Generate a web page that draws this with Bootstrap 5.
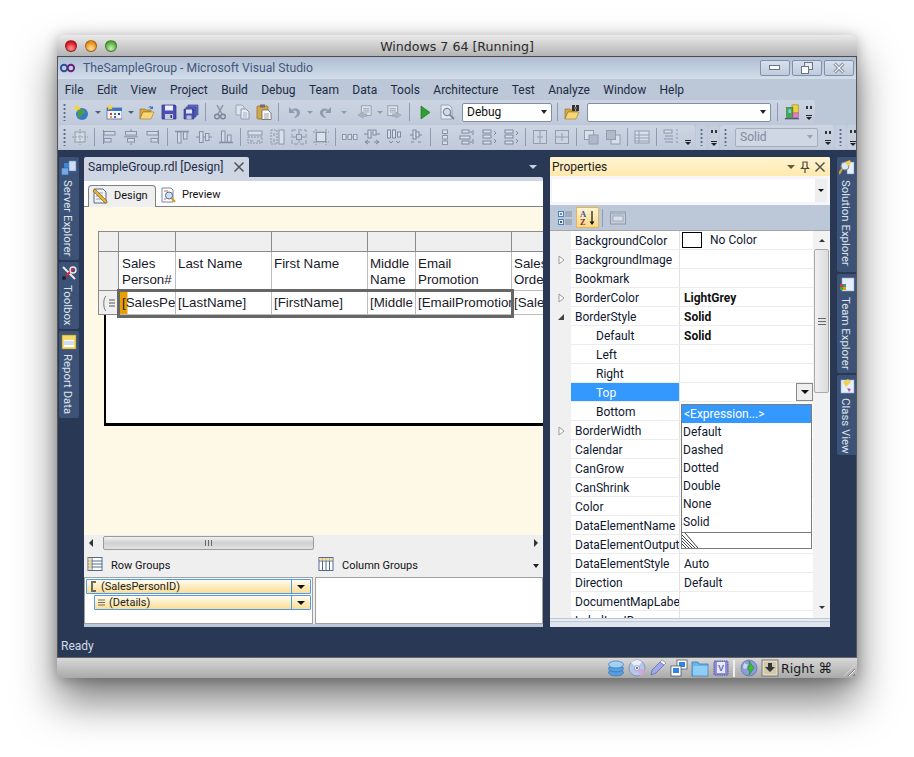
<!DOCTYPE html>
<html lang="en"><head><meta charset="utf-8"><title>Windows 7 64</title>
<link href="https://cdn.jsdelivr.net/npm/bootstrap@5.3.0/dist/css/bootstrap.min.css" rel="stylesheet">
<style>
html,body{height:757px;overflow:hidden;background:#fff}
body{font-family:Roboto,"Noto Sans",sans-serif;font-size:12px;line-height:1;color:#111}
.vs-win{margin:35px 0 0 57px;width:800px;height:643px;border-radius:5px 5px 3px 3px;box-shadow:0 24px 42px rgba(0,0,0,.5),0 2px 14px rgba(0,0,0,.28);background:#bcc7d8}
.vs-title{height:22px;background:linear-gradient(#eaeaea,#b4b4b4);border-bottom:1px solid #4c4c4c;border-radius:5px 5px 0 0;padding-left:8px;position:relative}
.vs-title-text{font:12.6px "DejaVu Sans",sans-serif;color:#2a2a2a;position:absolute;left:0;right:0;top:4px;text-align:center}
.vs-dot{width:12px;height:12px;border-radius:50%;margin-right:8px;border:1px solid rgba(0,0,0,.35)}
.vs-dot-r{background:radial-gradient(circle at 50% 75%,#ff9a9a,#d8101c 70%)}
.vs-dot-y{background:radial-gradient(circle at 50% 75%,#ffe0a0,#e88a10 70%)}
.vs-dot-g{background:radial-gradient(circle at 50% 75%,#c8f0b0,#52a838 70%)}
.vs-main{height:600px;border-left:1px solid #555;border-right:1px solid #555;background:#bcc7d8;overflow:hidden}
.vs-cap{height:22px;background:linear-gradient(#aebdd3,#d3deeb);padding-left:1px;color:#44557a}
.vs-logo{width:17px;height:10px}
.vs-cap-text{margin-left:7px;font-size:12.2px;padding-top:1px}
.vs-wbtn{width:30px;height:16px;border:1px solid #8090a8;border-radius:2px;background:linear-gradient(#d7e0ec,#bfcbdc);margin-right:2px}
.vs-menu{height:21px}
.vs-menu span{padding:0 6.7px;color:#1c2a44;font-size:12px}
.vs-tb{height:24px;margin-left:1px;background:linear-gradient(#cdd5e3,#c0cada);border-radius:3px}
.vs-tb1w{width:756px}
.vs-tb2w{width:636px}
.vs-tb3w{width:114px}
.vs-tb2{margin-top:1px}
.vs-tb2 .vs-slot svg{opacity:.8}
.vs-gap{background:#bcc7d8;height:1px}
.vs-grip{width:10px;height:18px;background:radial-gradient(circle,#5a6a85 1px,transparent 1.2px) center top/3px 4px repeat-y;flex:none}
.vs-slot{width:22px;height:22px;flex:none}
.vs-slot svg{width:16px;height:16px}
.vs-m1{margin-left:1px}
.vs-m3{margin-left:3px}
.vs-dd{width:11px;flex:none}
.vs-d12{width:12px}
.vs-d9{width:9px}
.vs-dd::after{content:"";display:block;margin:0 auto;width:0;height:0;border:3px solid transparent;border-top:3px solid #50607a;border-bottom:0}
.vs-dd-off::after{border-top-color:#8d99ac}
.vs-sep{width:7px;height:18px;flex:none;background:linear-gradient(#8f9bb0,#8f9bb0) center/1px 100% no-repeat}
.vs-sep2{margin-left:2px}
.vs-sep3{margin-left:3px}
.vs-chev{width:12px;flex:none;height:22px;position:relative}
.vs-chev::after{content:"";position:absolute;left:3px;bottom:7px;width:6px;height:1px;background:#222}
.vs-chev::before{content:"";position:absolute;left:3px;bottom:3px;border:3px solid transparent;border-top:3px solid #222;border-bottom:0}
.vs-chev2{background-image:linear-gradient(#333,#333),linear-gradient(#333,#333);background-size:2px 3px,2px 3px;background-position:3px 5px,7px 5px;background-repeat:no-repeat}
.vs-combo{height:19px;background:#fff;border:1px solid #7f8fa8;border-radius:2px;padding-left:4px;flex:none}
.vs-combo-arrow{width:0;height:0;border:3px solid transparent;border-top:4px solid #222;border-bottom:0;margin:0 4px 0 auto}
.vs-combo-w{width:90px;margin-left:4px;color:#111}
.vs-combo-l{width:184px;margin-left:4px}
.vs-combo-off{width:83px;background:#cfd7e3;color:#7f8a9c;border-color:#a4aebf;margin-left:5px}
.vs-combo-off .vs-combo-arrow{border-top-color:#98a3b4}
.vs-mini{width:11px;height:24px;border-radius:3px;background-color:#c5cedf;margin-left:1px;position:relative;flex:none}
.vs-work{height:477px;background:#293955;padding-top:7px}
.vs-vtabs{width:19px;margin-left:1px;flex:none}
.vs-vtab{background:#3d5277;border-radius:2px;color:#dfe5ee;writing-mode:vertical-rl;font-size:11.4px;padding-top:23px;padding-right:3px;position:relative;margin-bottom:2px;line-height:17px;white-space:nowrap;overflow:hidden}
.vs-vtab svg{position:absolute;top:3px;left:2px;width:16px;height:16px}
.vs-h103{height:103px}.vs-h67{height:67px}.vs-h87{height:87px}.vs-h115{height:115px}.vs-h99{height:99px}.vs-h80{height:80px}
.vs-doc{width:459px;margin-left:6px;flex:none;height:470px}
.vs-doctab{height:20px}
.vs-tabhead{width:165px;height:20px;background:#ced6e4;border-radius:2px 2px 0 0;padding-left:4px;color:#1d2b44;white-space:nowrap}
.vs-tabx{margin-left:auto;margin-right:4px}
.vs-caret{width:0;height:0;border:4px solid transparent;border-top:4px solid #c9d1de;border-bottom:0;margin:0 6px 0 auto}
.vs-caret-d{border-top-color:#6a5a30;margin-right:0}
.vs-strip{height:4px;background:#ced6e4;border-radius:0 2px 0 0}
.vs-subtabs{height:26px;background:#fff;border-bottom:1px solid #808080;padding-left:4px;align-items:flex-end}
.vs-design{width:68px;height:22px;background:#efefef;border:1px solid #808080;border-bottom:0;border-radius:4px 4px 0 0;padding:0 0 2px 3px;font-size:11px;color:#111;margin-bottom:-1px}
.vs-preview{height:22px;font-size:11px;padding:0 0 1px 4px;color:#111}
.vs-design svg,.vs-preview svg{width:16px;height:16px;margin-right:6px}
.vs-surface{height:328px;background:#fdf9e6;padding:24px 0 0 14px;position:relative;overflow:hidden;font-family:"Liberation Sans",Arial,sans-serif;font-size:13.33px}
.vs-rep{border-collapse:collapse;table-layout:fixed;width:445px}
.vs-c20{width:20px}.vs-c57{width:57px}.vs-c96{width:96px}.vs-c48{width:48px}.vs-c32{width:32px}
.vs-rep td{border:1px solid #bdbdbd;padding:4px 2px 0 2px;vertical-align:top;background:#fff;overflow:hidden;white-space:nowrap;line-height:16px;color:#1a1a2a}
.vs-rep td.vs-wrap{white-space:normal}
.vs-rep td.vs-first{padding-left:3px}
.vs-rep td.vs-hd{background:#efefef;border-color:#8b8b8b;padding:0}
.vs-rep tr.vs-r1 td{height:20px}
.vs-rep tr.vs-r2 td{height:39px}
.vs-rep tr.vs-r3 td{height:24px;padding-top:4px}
.vs-rep td.vs-handle{background:linear-gradient(90deg,#e8a000 8px,#fff 8px);padding-left:3px}
.vs-rep td.vs-gut{background:#efefef;padding:2px 0 0 2px;border-color:#8b8b8b}
.vs-sel{position:absolute;left:33px;top:82px;width:397px;height:29px;border:3px solid #666;pointer-events:none}
.vs-body{margin-left:6px;height:111px;background:#fff;border-left:2px solid #000;border-bottom:3px solid #000}
.vs-hs{height:15px;background:#efefef;padding:0 3px}
.vs-hs-thumb{width:211px;height:14px;margin-left:10px;background:linear-gradient(#f2f2f2,#d0d0d0 50%,#e2e2e2);border:1px solid #9a9a9a;border-radius:2px}
.vs-grv{width:8px;height:6px;background:repeating-linear-gradient(90deg,#666 0 1px,transparent 1px 3px)}
.vs-arr-l,.vs-arr-r{width:0;height:0;border:4px solid transparent}
.vs-arr-l{border-right:4px solid #333;border-left:0;margin-left:2px}
.vs-arr-r{border-left:4px solid #333;border-right:0;margin-left:auto;margin-right:2px}
.vs-ghead{height:27px;background:#efefef;font-size:11px;color:#111;padding-top:4px}
.vs-ghead svg{width:16px;height:16px;margin:-4px 8px 0 3px}
.vs-gcol{width:231px;flex:none}
.vs-glists{height:47px;background:#efefef}
.vs-glist{background:#fff;border:1px solid #a0a0a0;height:47px;position:relative}
.vs-gl1{width:229px;margin-right:2px;padding:1px 1px 0 1px}
.vs-gl2{width:228px}
.vs-gbar{height:15px;margin-bottom:1px;border:1px solid #4b9cea;background:linear-gradient(#fffdf0,#fdeabc 55%,#fcdc92);font-size:11px;padding-left:3px;border-radius:1px;color:#222}
.vs-gb2{margin-left:8px}
.vs-gi{margin-right:3px}
.vs-gdd{width:19px;height:100%;margin-left:auto;border-left:1px solid #4b9cea}
.vs-gdd::after{content:"";display:block;width:0;height:0;border:4px solid transparent;border-top:4px solid #111;border-bottom:0;margin:5px auto 0}
.vs-gfoot{height:3px;background:#bcc7d8}
.vs-props{width:280px;margin-left:7px;flex:none;height:470px;background:#efefef;position:relative;overflow:hidden;border-radius:2px 2px 0 0}
.vs-phead{height:19px;background:linear-gradient(#fff3d2,#ffe9ad);padding-left:2px;color:#222}
.vs-phead svg{width:12px;height:12px;margin-left:3px}
.vs-pcombo{height:29px;background:#f4f6f9;padding:3px 3px 3px 2px}
.vs-pbox{height:23px;background:#fff}
.vs-pbtn{width:12px;height:100%;background:#eee;margin-left:auto}
.vs-pbtn::after{content:"";display:block;width:0;height:0;border:3px solid transparent;border-top:3px solid #111;border-bottom:0;margin:10px auto 0}
.vs-ptool{height:25px;background:#bcc7d8;padding-left:3px}
.vs-ptool svg{width:16px;height:16px}
.vs-pb{width:23px;height:21px}
.vs-pb-on{background:linear-gradient(#fff3cf,#fbd98a);border:1px solid #e5b454}
.vs-grid{height:388px;background:#fff;overflow:hidden;border-top:1px solid #a5a5a5;position:relative}
.vs-rows{width:263px;flex:none}
.vs-row{height:19px;color:#101830}
.vs-g{width:21px;height:19px;flex:none;background:#f0f0f0}
.vs-n{width:109px;height:19px;flex:none;border-bottom:1px solid #ececec;border-right:1px solid #e2e2e2;padding-left:4px;overflow:hidden;white-space:nowrap;line-height:20px}
.vs-n2{padding-left:25px}
.vs-v{width:133px;height:19px;flex:none;border-bottom:1px solid #ececec;padding-left:4px;white-space:nowrap;line-height:20px}
.vs-v b{font-weight:700;color:#111}
.vs-on{background:#3399ff;color:#fff}
.vs-tri{width:7px;height:10px;margin-left:8px}
.vs-tri-d{width:0;height:0;margin-left:8px;border-style:solid;border-width:0 0 6px 6px;border-color:transparent transparent #444 transparent}
.vs-swatch{width:20px;height:16px;border:1px solid #000;background:#fff;margin-right:8px;margin-left:-2px}
.vs-vbtn{width:17px;height:18px;margin-left:auto;border:1px solid #8a8a8a;background:#eee}
.vs-vbtn::after{content:"";display:block;width:0;height:0;border:4px solid transparent;border-top:4px solid #111;border-bottom:0;margin:6px auto 0}
.vs-vs{width:17px;flex:none;background:#f2f2f2;height:388px}
.vs-vs-up,.vs-vs-dn{height:18px}
.vs-vs-up::after{content:"";display:block;width:0;height:0;border:3.5px solid transparent;border-bottom:3px solid #333;border-top:0;margin:8px auto 0}
.vs-vs-dn::after{content:"";display:block;width:0;height:0;border:3.5px solid transparent;border-top:3px solid #333;border-bottom:0;margin:5px auto 0}
.vs-vs-th{height:144px;background:linear-gradient(90deg,#f0f0f0,#dcdcdc);border:1px solid #a9a9a9;border-radius:2px;margin:0 1px}
.vs-grv2{width:8px;height:7px;background:repeating-linear-gradient(#666 0 1px,transparent 1px 3px)}
.vs-list{position:absolute;left:131px;top:173px;width:131px;height:145px;background:#fff;border:1px solid #7c7c7c;color:#101830;z-index:2}
.vs-li{height:18px;padding-left:1px}
.vs-li-on{background:#3399ff;color:#fff;padding-left:2px}
.vs-lfoot{height:16px;border-top:1px solid #7c7c7c;margin-top:1px;overflow:hidden}
.vs-lfoot svg{display:block;width:16px;height:15px}
.vs-pfoot{height:10px;background:linear-gradient(#bcc7d8 0 1px,#e8ebf0 1px 3px,#bcc7d8 3px 4px,#dfe4ec 4px 9px,#bcc7d8 9px)}
.vs-rtabs{width:19px;margin-left:7px;flex:none}
.vs-status{height:30px;background:#293955;color:#d5dce8;padding:8px 0 0 3px}
.vs-host{height:21px;background:linear-gradient(#d8d8d8,#a9a9a9);border-top:1px solid #666;border-radius:0 0 3px 3px;padding-left:548px;position:relative;color:#111}
.vs-hi{width:21px;height:20px;flex:none}
.vs-hi svg{width:18px;height:18px}
.vs-hsep{width:2px;height:17px;background:#efefef;margin:0 3px 0 2px}
.vs-rt{font:12.6px "DejaVu Sans",sans-serif;margin-left:1px;white-space:nowrap;color:#1a1a1a}
.vs-cmd{font-size:14px;margin-left:4px}
.vs-resize{position:absolute;right:2px;bottom:2px;width:11px;height:11px;background:repeating-linear-gradient(135deg,transparent 0 2px,#7f7f7f 2px 3px,#eee 3px 4px);clip-path:polygon(100% 0,100% 100%,0 100%)}
.vs-defs{position:absolute;width:0;height:0}
</style></head>
<body>
<svg class="vs-defs" aria-hidden="true"><defs>
<symbol id="web" viewBox="0 0 16 16"><circle cx="9" cy="10" r="6" fill="#3a78c8"/><path d="M5 7l4-2 3 2-1 3-3 1-1 4-2-3z" fill="#4aa040"/><path d="M4 0l1 2.500 2.500-.5L6 4l1.500 2L5 5.500 4 8 3 5.500.5 6 2 4 .5 2 3 2.500z" fill="#f7d43c"/></symbol>
<symbol id="newi" viewBox="0 0 16 16"><rect x="1" y="4" width="15" height="11" fill="#f4f6fb" stroke="#6f84a8"/><rect x="1" y="4" width="15" height="3" fill="#3f74c6"/><rect x="4" y="9" width="2" height="2" fill="#d33"/><rect x="8" y="9" width="2" height="2" fill="#393"/><rect x="12" y="9" width="2" height="2" fill="#33c"/><rect x="4" y="12" width="2" height="2" fill="#da2"/><rect x="8" y="12" width="2" height="2" fill="#93c"/><path d="M4 0l1 2 2-.5L5.500 3.500 6.500 5.500 4 5 2 6l.5-2.500L.5 2l2 0z" fill="#f7d43c"/></symbol>
<symbol id="open" viewBox="0 0 16 16"><path d="M1 5h5l1 1h5v2H4l-3 7z" fill="#d9a73c" stroke="#8a6a20" stroke-width=".6"/><path d="M4 8h11l-3 7H1z" fill="#f8d675" stroke="#9a7a28" stroke-width=".6"/><path d="M9 4c1-2 3-2 4-1l1-1v3h-3l1-1c-1-.7-2-.5-3 0z" fill="#3a70b8"/></symbol>
<symbol id="save" viewBox="0 0 16 16"><path d="M1 1h13l1 1v13H1z" fill="#4a4fb5" stroke="#2d3180" stroke-width=".7"/><rect x="4" y="1.500" width="8" height="5" fill="#eef"/><rect x="4" y="10" width="8" height="5" fill="#c5cae0"/><rect x="9.500" y="11" width="1.500" height="3" fill="#334"/></symbol>
<symbol id="saveall" viewBox="0 0 16 16"><path d="M5 1h10v10H5z" fill="#6a78c8" stroke="#2d3180" stroke-width=".6"/><path d="M3 3h10v10H3z" fill="#5a66c0" stroke="#2d3180" stroke-width=".6"/><path d="M1 5h10v10H1z" fill="#4a4fb5" stroke="#2d3180" stroke-width=".6"/><rect x="3" y="5.500" width="6" height="4" fill="#dfe3f5"/><rect x="3.500" y="11.500" width="5" height="3.500" fill="#b9bfd8"/></symbol>
<symbol id="cut" viewBox="0 0 16 16"><path d="M5 1l5 9M11 1L6 10" stroke="#8a94a6" stroke-width="1.500" fill="none"/><circle cx="5" cy="12.500" r="2.300" fill="none" stroke="#7a8496" stroke-width="1.400"/><circle cx="11" cy="12.500" r="2.300" fill="none" stroke="#7a8496" stroke-width="1.400"/></symbol>
<symbol id="copy" viewBox="0 0 16 16"><path d="M2 1h6l2 2v8H2z" fill="#dce2ec" stroke="#9aa4b6"/><path d="M7 5h5l3 3v7H7z" fill="#e6ebf3" stroke="#8f9aad"/><path d="M9 9h4M9 11h4M9 13h4" stroke="#aab3c2"/></symbol>
<symbol id="paste" viewBox="0 0 16 16"><rect x="1" y="2" width="11" height="13" rx="1" fill="#d3a84e" stroke="#8a6a20" stroke-width=".7"/><rect x="4" y=".5" width="5" height="3" fill="#6e6e6e"/><path d="M6 6h6l3 3v6.500H6z" fill="#fff" stroke="#555" stroke-width=".7"/><path d="M8 10h5M8 12h5M8 14h5" stroke="#777" stroke-width=".7"/></symbol>
<symbol id="undo" viewBox="0 0 16 16"><path d="M4 3v6h6L8 7c2-1 4 0 4 2 0 2-1 3-3 4l1 1c3-1 5-3 5-5 0-4-5-6-8-3z" fill="#8f9bad"/></symbol>
<symbol id="redo" viewBox="0 0 16 16"><path d="M12 3v6H6l2-2C6 6 4 7 4 9c0 2 1 3 3 4l-1 1C3 13 1 11 1 9c0-4 5-6 8-3z" fill="#8f9bad"/></symbol>
<symbol id="navb" viewBox="0 0 18 16"><rect x="6" y="1" width="11" height="11" fill="#dfe4ec" stroke="#8e99ac"/><path d="M8 4h7M8 6h7M8 8h7" stroke="#98a3b5"/><path d="M8 8v2h4v3H8v2L2 11.500z" fill="#aab3c2" stroke="#8e99ac" stroke-width=".5"/></symbol>
<symbol id="navf" viewBox="0 0 18 16"><rect x="1" y="1" width="11" height="11" fill="#dfe4ec" stroke="#8e99ac"/><path d="M3 4h7M3 6h7M3 8h7" stroke="#98a3b5"/><path d="M10 8v2H6v3h4v2l6-3.500z" fill="#aab3c2" stroke="#8e99ac" stroke-width=".5"/></symbol>
<symbol id="play" viewBox="0 0 16 16"><path d="M4 2l9 6.500L4 15z" fill="#2ea02e" stroke="#157015" stroke-width=".6"/></symbol>
<symbol id="find" viewBox="0 0 16 16"><path d="M2 1h8l3 3v11H2z" fill="#e6ebf3" stroke="#97a2b4"/><circle cx="8" cy="8" r="3.600" fill="#d4dbe6" stroke="#7f8ba0" stroke-width="1.300"/><path d="M10.500 10.500L15 15" stroke="#7f8ba0" stroke-width="2"/></symbol>
<symbol id="ffind" viewBox="0 0 16 16"><path d="M1 5h5l1 1h6v2H4l-3 7z" fill="#d9a73c" stroke="#8a6a20" stroke-width=".6"/><path d="M4 8h11l-3 7H1z" fill="#f8d675" stroke="#9a7a28" stroke-width=".6"/><rect x="8" y="1" width="3" height="6" fill="#333"/><rect x="12" y="1" width="3" height="6" fill="#333"/><rect x="10" y="3" width="3" height="2" fill="#666"/></symbol>
<symbol id="cfg" viewBox="0 0 18 18"><rect x="9" y="1" width="7" height="10" fill="#f2cf38" stroke="#927a14" stroke-width=".6"/><rect x="3" y="4" width="7" height="11" fill="#46a84a" stroke="#2a6a30" stroke-width=".6"/><rect x="5" y="6" width="3" height="4" fill="#7ed0e8"/><rect x="10" y="10" width="6" height="5" fill="#e77cc4" stroke="#98408a" stroke-width=".6"/><path d="M1 16.500h16" stroke="#4a5a78" stroke-width="1.500"/></symbol>
<symbol id="a0" viewBox="0 0 16 16"><g stroke="#8492a6" fill="none"><rect x="3" y="3" width="10" height="10" fill="#d7dde7"/><path d="M8 0v16M0 8h16" stroke-dasharray="2 1"/></g></symbol>
<symbol id="a1" viewBox="0 0 16 16"><g stroke="#74829a" fill="#d7dde7"><path d="M2.500 1v14"/><rect x="3" y="2.500" width="11" height="3.500"/><rect x="3" y="9.500" width="7" height="3.500"/></g></symbol>
<symbol id="a2" viewBox="0 0 16 16"><g stroke="#74829a" fill="#d7dde7"><rect x="2.500" y="2.500" width="11" height="3.500"/><rect x="4.500" y="9.500" width="7" height="3.500"/><path d="M1 7.800h14M8 0v2M8 14v2"/></g></symbol>
<symbol id="a3" viewBox="0 0 16 16"><g stroke="#74829a" fill="#d7dde7"><path d="M13.500 1v14"/><rect x="2" y="2.500" width="11" height="3.500"/><rect x="6" y="9.500" width="7" height="3.500"/></g></symbol>
<symbol id="a4" viewBox="0 0 16 16"><g stroke="#74829a" fill="#d7dde7"><path d="M1 2.500h14" stroke-width="1.500"/><rect x="3.500" y="3" width="3.500" height="11"/><rect x="9.500" y="3" width="3.500" height="7"/></g></symbol>
<symbol id="a5" viewBox="0 0 16 16"><g stroke="#74829a" fill="#d7dde7"><path d="M0 8h16"/><rect x="3.500" y="2.500" width="3.500" height="11"/><rect x="9.500" y="4.500" width="3.500" height="7"/></g></symbol>
<symbol id="a6" viewBox="0 0 16 16"><g stroke="#74829a" fill="#d7dde7"><path d="M1 13.500h14" stroke-width="1.500"/><rect x="3.500" y="2" width="3.500" height="11"/><rect x="9.500" y="6" width="3.500" height="7"/></g></symbol>
<symbol id="s1" viewBox="0 0 16 16"><g stroke="#7c899d" fill="none"><rect x="1" y="2" width="14" height="4" fill="#dfe4ec"/><rect x="1" y="8" width="14" height="6" stroke-dasharray="2 1"/><path d="M3 12h3M10 12h3"/></g></symbol>
<symbol id="s2" viewBox="0 0 16 16"><g stroke="#7c899d" fill="none"><rect x="10" y="1" width="5" height="14" fill="#dfe4ec"/><rect x="2" y="1" width="6" height="14" stroke-dasharray="2 1"/><path d="M5 4v3M5 10v3"/></g></symbol>
<symbol id="s3" viewBox="0 0 16 16"><g stroke="#7c899d" fill="none"><rect x="1" y="1" width="14" height="14" stroke-dasharray="4 2"/><rect x="5.500" y="5.500" width="5" height="5"/><path d="M8 2v3M8 11v3M2 8h3M11 8h3"/></g></symbol>
<symbol id="s4" viewBox="0 0 16 16"><g stroke="#7c899d" fill="#dfe4ec"><rect x="3.500" y="3.500" width="9" height="9"/><path d="M0 3h16M0 13h16M3 0v16M13 0v16" stroke-dasharray="2 1" fill="none"/></g></symbol>
<symbol id="h1" viewBox="0 0 16 16"><g stroke="#7c899d" fill="#dfe4ec"><rect x=".5" y="5.500" width="3.500" height="5"/><rect x="6" y="5.500" width="3.500" height="5"/><rect x="11.500" y="5.500" width="3.500" height="5"/><path d="M4 8h2M9.500 8h2" fill="none"/></g></symbol>
<symbol id="h2" viewBox="0 0 16 16"><g stroke="#6b7990" fill="#dfe4ec"><rect x="4" y="1" width="3" height="8"/><rect x="9" y="1" width="3" height="5"/><path d="M0 5h4M12 5h4M1 13h5M10 13h5M4 11l-3 2 3 2M12 11l3 2-3 2" fill="none"/></g></symbol>
<symbol id="h3" viewBox="0 0 16 16"><g stroke="#6b7990" fill="#dfe4ec"><rect x="1.500" y="1" width="3" height="8"/><rect x="6.500" y="1" width="3" height="8"/><rect x="11.500" y="3" width="3" height="5"/><path d="M3 12l2 2 2-2M10 12l2 2 2-2" fill="none"/></g></symbol>
<symbol id="h4" viewBox="0 0 16 16"><g stroke="#6b7990" fill="#dfe4ec"><rect x="5" y="1" width="3" height="9"/><rect x="8" y="3" width="3" height="5"/><path d="M2 6h3M11 6h3M3 13h3M10 13h3" fill="none"/></g></symbol>
<symbol id="v1" viewBox="0 0 16 16"><g stroke="#7c899d" fill="#dfe4ec"><rect x="5.500" y="1" width="5" height="3.500"/><rect x="5.500" y="6.500" width="5" height="3.500"/><rect x="5.500" y="12" width="5" height="3.500"/><path d="M8 4.500v2M8 10v2" fill="none"/></g></symbol>
<symbol id="v2" viewBox="0 0 16 16"><g stroke="#6b7990" fill="#dfe4ec"><rect x="3" y="1" width="7" height="3"/><rect x="1" y="7" width="10" height="3"/><rect x="3" y="12" width="7" height="3"/><path d="M12 2v2M14 1v5M12 12v2M14 10v5" fill="none"/></g></symbol>
<symbol id="v3" viewBox="0 0 16 16"><g stroke="#6b7990" fill="#dfe4ec"><rect x="2" y="1" width="8" height="3"/><rect x="2" y="6" width="8" height="3"/><rect x="2" y="12" width="8" height="3"/><path d="M13 2l2 2-2 2M13 10l2 2-2 2" fill="none"/></g></symbol>
<symbol id="c1" viewBox="0 0 16 16"><g stroke="#8492a6" fill="#cfd6e2"><rect x="1.500" y="1.500" width="13" height="13"/><path d="M8 1v14M5 8h6" fill="none"/></g></symbol>
<symbol id="c2" viewBox="0 0 16 16"><g stroke="#8492a6" fill="#cfd6e2"><rect x="1.500" y="1.500" width="13" height="13"/><path d="M1 8h14M8 4v8" fill="none"/></g></symbol>
<symbol id="f1" viewBox="0 0 16 16"><g stroke="#8492a6"><rect x="1.500" y="1.500" width="9" height="9" fill="#dfe4ec"/><rect x="6" y="6" width="9" height="9" fill="#a9b4c5"/></g></symbol>
<symbol id="f2" viewBox="0 0 16 16"><g stroke="#8492a6"><rect x="6" y="6" width="9" height="9" fill="#dfe4ec"/><rect x="1.500" y="1.500" width="9" height="9" fill="#a9b4c5"/></g></symbol>
<symbol id="tab" viewBox="0 0 16 16"><rect x="1" y="2" width="14" height="12" fill="#dfe4ec" stroke="#8492a6"/><path d="M1 6h14M1 9h14M1 12h14M5 2v12" stroke="#8492a6"/></symbol>
<symbol id="dat" viewBox="0 0 16 16"><rect x="1" y="1" width="8" height="3" fill="#dfe4ec" stroke="#7c899d"/><path d="M2 7h8M1 10h9M2 13h8" stroke="#7c899d"/><path d="M13 1h2M13 5h2M13 9h2M13 13h2" stroke="#7c899d"/></symbol>
<symbol id="srv" viewBox="0 0 16 16"><rect x="8" y="1" width="7" height="10" fill="#cfe0f6" stroke="#6288bb" stroke-width=".6"/><rect x="3" y="3" width="5" height="8" fill="#3c86d4"/><rect x=".5" y="8" width="7" height="7" fill="#78a8e0" stroke="#2a5a98" stroke-width=".6"/></symbol>
<symbol id="tbx" viewBox="0 0 16 16"><path d="M2 2l12 12" stroke="#e9ecf2" stroke-width="2"/><path d="M14 2L5 11" stroke="#d23" stroke-width="2"/><circle cx="3" cy="13" r="2" fill="#222"/><circle cx="12" cy="5" r="3" fill="none" stroke="#e9ecf2" stroke-width="1.400"/></symbol>
<symbol id="rpd" viewBox="0 0 16 16"><rect x="1" y="1" width="14" height="14" fill="#f4d869" stroke="#9a8224" stroke-width=".6"/><rect x="3" y="6" width="10" height="7" fill="#fff"/><path d="M3 8h10M3 10h10" stroke="#a4b8d8"/></symbol>
<symbol id="sol" viewBox="0 0 16 16"><rect x="8" y="2" width="7" height="12" fill="#e7eef8" stroke="#6288bb" stroke-width=".5"/><circle cx="6" cy="6" r="4" fill="#d9e6f7" stroke="#888"/><path d="M3 9l-3 5" stroke="#d4a52c" stroke-width="2.200"/><path d="M6 2l5-2 1 3-3 3z" fill="#f3cd45"/></symbol>
<symbol id="tex" viewBox="0 0 16 16"><rect x="3" y="1" width="12" height="13" fill="#e7eef8" stroke="#8aa7d0" stroke-width=".6"/><rect x="1" y="7" width="3" height="3" fill="#d33"/><rect x="4" y="7" width="3" height="3" fill="#39a"/><rect x="1" y="10" width="3" height="3" fill="#3a3"/><rect x="4" y="10" width="3" height="3" fill="#e90"/></symbol>
<symbol id="cls" viewBox="0 0 16 16"><rect x="2" y="2" width="13" height="13" fill="#e7eef8" stroke="#8aa7d0" stroke-width=".6"/><path d="M4 4l5-3 3 3-5 5z" fill="#f0d050"/><path d="M8 10l4 1-2 3z" fill="#b050c0"/></symbol>
<symbol id="pen" viewBox="0 0 16 16"><path d="M2 1h9l3 3v11H2z" fill="#eef3f8" stroke="#5a6a80"/><path d="M4 5h7M4 8h7M4 11h7" stroke="#8ea3bd"/><path d="M1 3l2-2 12 12 0 2-2 0z" fill="#e9b12e" stroke="#6a5212" stroke-width=".6"/></symbol>
<symbol id="pre" viewBox="0 0 16 16"><path d="M2 1h9l2 2v12H2z" fill="#fff" stroke="#7088a8"/><path d="M4 4h4M4 12h2" stroke="#d36b3c"/><circle cx="9" cy="8.500" r="3.500" fill="#cfe2f5" stroke="#5a6a80"/><path d="M11.500 11l3.500 4" stroke="#d79a2a" stroke-width="2"/></symbol>
<symbol id="rg" viewBox="0 0 16 16"><rect x="1" y="1.500" width="14" height="13" fill="#fff" stroke="#526a90"/><path d="M1 5h14M1 8h14M1 11h14M5 1.500v13" stroke="#526a90"/><rect x="1.500" y="2" width="3" height="12" fill="#f2d68a" opacity=".8"/></symbol>
<symbol id="cg" viewBox="0 0 16 16"><rect x="1" y="1.500" width="14" height="13" fill="#fff" stroke="#526a90"/><path d="M4.500 1.500v13M8 1.500v13M11.500 1.500v13M1 5h14" stroke="#526a90"/><rect x="1.500" y="2" width="13" height="2.500" fill="#f2d68a" opacity=".8"/></symbol>
<symbol id="dsk" viewBox="0 0 18 18"><g fill="#58a0e0" stroke="#2668ad" stroke-width=".6"><ellipse cx="9" cy="13.500" rx="7.500" ry="3.500"/><ellipse cx="9" cy="9.500" rx="7.500" ry="3.500"/><ellipse cx="9" cy="5.500" rx="7.500" ry="3.500" fill="#a5d0f4"/></g></symbol>
<symbol id="cd" viewBox="0 0 18 18"><circle cx="9" cy="9" r="8" fill="#b7c7ea" stroke="#6078ae" stroke-width=".6"/><path d="M9 9L3 3.500A8 8 0 0 1 14 3z" fill="#e8eefa"/><path d="M9 9l3 8a8 8 0 0 0 5-6z" fill="#d2a8dc"/><circle cx="9" cy="9" r="2.500" fill="#fff" stroke="#6078ae" stroke-width=".6"/><circle cx="9" cy="9" r="1" fill="#3a4a6a"/></symbol>
<symbol id="usb" viewBox="0 0 18 18"><path d="M2 16l1-5 8-8 4 3-8 8z" fill="#9ea9ea" stroke="#4a56a0" stroke-width=".6"/><path d="M11 3l2-2 4 3-2 2z" fill="#fff" stroke="#5c6498" stroke-width=".6"/></symbol>
<symbol id="net" viewBox="0 0 18 18"><rect x="7" y="1" width="10" height="9" fill="#fff" stroke="#445" stroke-width=".7"/><rect x="9" y="3" width="6" height="5" fill="#2e86e4"/><rect x="1" y="7" width="10" height="10" fill="#fff" stroke="#445" stroke-width=".7"/><rect x="3" y="9" width="6" height="5" fill="#2e86e4"/></symbol>
<symbol id="fld" viewBox="0 0 18 18"><path d="M1 3h6l1 2h9v12H1z" fill="#69b4ec" stroke="#2c72b4" stroke-width=".7"/><rect x="2" y="7" width="14.500" height="9.500" fill="#8fcdf6"/></symbol>
<symbol id="vc" viewBox="0 0 18 18"><rect x="2" y="2" width="14" height="14" rx="1" fill="#8f8fd8" stroke="#4f4fa0" stroke-dasharray="1.500 .7"/><rect x="5" y="3" width="8" height="11" fill="#e8eaf8"/><text x="9" y="12" font-size="9" font-weight="700" text-anchor="middle" font-family="Liberation Sans,sans-serif" fill="#6a6ab8">V</text></symbol>
<symbol id="glb" viewBox="0 0 18 18"><circle cx="9" cy="9" r="8" fill="#8a9fd8" stroke="#4f619e" stroke-width=".6"/><path d="M4 4l4 2-2 4-3-1z" fill="#ccd6f2"/><path d="M9 2l5 7-5 7 1-5H8V7h2z" fill="#3cc03c" stroke="#177a17" stroke-width=".5"/></symbol>
<symbol id="cap" viewBox="0 0 18 18"><rect x="1" y="1" width="16" height="16" fill="#e2dcc4" stroke="#666" stroke-width=".8"/><rect x="3" y="3" width="12" height="12" fill="#cfc8ad"/><path d="M7 4h4v4h3l-5 5-5-5h3z" fill="#333"/></symbol>
<symbol id="grpb" viewBox="0 0 16 16"><rect x="1.500" y="1.500" width="5" height="5" fill="#e6eef8" stroke="#4a82bf"/><rect x="1.500" y="9.500" width="5" height="5" fill="#e6eef8" stroke="#4a82bf"/><path d="M3 4h2M3 12h2M4 11v2" stroke="#223"/><path d="M8 2h7M8 4h7M8 6h7M8 10h7M8 12h7M8 14h7" stroke="#7f8ca0" stroke-width=".9"/></symbol>
<symbol id="az" viewBox="0 0 16 16"><text x="0" y="7" font-family="Liberation Serif,serif" font-size="8.500" font-weight="700" fill="#3754a8">A</text><text x="0" y="15" font-family="Liberation Serif,serif" font-size="8.500" font-weight="700" fill="#8a2a38">Z</text><path d="M12 1v12" stroke="#111" stroke-width="1.200"/><path d="M9.500 11.500L12 15l2.500-3.500z" fill="#111"/></symbol>
<symbol id="pg" viewBox="0 0 16 16"><rect x=".5" y="2" width="15" height="12" fill="#c5cdd9" stroke="#8e98a8"/><rect x=".5" y="2" width="15" height="2.500" fill="#aab4c3"/><rect x="3" y="6" width="10" height="5" fill="#dbe0e8" stroke="#8e98a8" stroke-width=".7"/></symbol>
<symbol id="pin" viewBox="0 0 12 12"><path d="M4 1h4v5l1.500 1.500h-7L4 6zM6 7.500V12" fill="none" stroke="#4a4a3a" stroke-width="1.200"/></symbol>
<symbol id="cx" viewBox="0 0 12 12"><path d="M1.500 1.500l9 9M10.500 1.500l-9 9" stroke="#555" stroke-width="1.500"/></symbol>
<symbol id="tri" viewBox="0 0 7 10"><path d="M1 1l5 4-5 4z" fill="#fff" stroke="#9a9a9a"/></symbol>
<symbol id="lg" viewBox="0 0 20 10"><circle cx="6" cy="5" r="3.800" fill="none" stroke="#2a4f9c" stroke-width="2.200"/><circle cx="14" cy="5" r="3.800" fill="none" stroke="#68217a" stroke-width="2.200"/></symbol>
<symbol id="hat" viewBox="0 0 16 15"><path d="M0 2l13 13M0 5l10 10M0 8l7 7M0 11l4 4M3 0l13 15" stroke="#444" stroke-width="1"/></symbol>
</defs></svg>

<div class="vs-win">
  <div class="vs-title d-flex align-items-center">
    <span class="vs-dot vs-dot-r"></span><span class="vs-dot vs-dot-y"></span><span class="vs-dot vs-dot-g"></span>
    <div class="vs-title-text">Windows 7 64 [Running]</div>
  </div>
  <div class="vs-main">
    <div class="vs-cap d-flex align-items-center">
      <svg class="vs-logo"><use href="#lg"/></svg>
      <span class="vs-cap-text">TheSampleGroup - Microsoft Visual Studio</span>
      <span class="vs-wbtn ms-auto d-flex align-items-center justify-content-center"><svg width="12" height="6"><rect x=".5" y=".5" width="10" height="4" fill="#fff" stroke="#6a7388"/></svg></span>
      <span class="vs-wbtn d-flex align-items-center justify-content-center"><svg width="12" height="12"><rect x="3.500" y=".5" width="8" height="7" fill="#e8edf4" stroke="#6a7388"/><rect x=".5" y="4.500" width="7" height="7" fill="#fff" stroke="#6a7388"/></svg></span>
      <span class="vs-wbtn d-flex align-items-center justify-content-center"><svg width="12" height="12"><path d="M1.500 1.500l9 9M10.500 1.500l-9 9" stroke="#6a7388" stroke-width="3"/><path d="M1.500 1.500l9 9M10.500 1.500l-9 9" stroke="#f4f6fa" stroke-width="1.300"/></svg></span>
    </div>
    <div class="vs-menu d-flex align-items-center">
      <span>File</span><span>Edit</span><span>View</span><span>Project</span><span>Build</span><span>Debug</span><span>Team</span><span>Data</span><span>Tools</span><span>Architecture</span><span>Test</span><span>Analyze</span><span>Window</span><span>Help</span>
    </div>
    <div class="vs-tb vs-tb1w d-flex align-items-center">
      <span class="vs-grip"></span>
      <span class="vs-slot vs-m1 d-flex align-items-center justify-content-center"><svg><use href="#web"/></svg></span><span class="vs-dd"></span>
      <span class="vs-slot d-flex align-items-center justify-content-center"><svg><use href="#newi"/></svg></span><span class="vs-dd"></span>
      <span class="vs-slot d-flex align-items-center justify-content-center"><svg><use href="#open"/></svg></span>
      <span class="vs-slot d-flex align-items-center justify-content-center"><svg><use href="#save"/></svg></span>
      <span class="vs-slot d-flex align-items-center justify-content-center"><svg><use href="#saveall"/></svg></span>
      <span class="vs-sep"></span>
      <span class="vs-slot d-flex align-items-center justify-content-center"><svg><use href="#cut"/></svg></span>
      <span class="vs-slot d-flex align-items-center justify-content-center"><svg><use href="#copy"/></svg></span>
      <span class="vs-slot d-flex align-items-center justify-content-center"><svg><use href="#paste"/></svg></span>
      <span class="vs-sep"></span>
      <span class="vs-slot d-flex align-items-center justify-content-center"><svg><use href="#undo"/></svg></span><span class="vs-dd vs-d12 vs-dd-off"></span>
      <span class="vs-slot d-flex align-items-center justify-content-center"><svg><use href="#redo"/></svg></span><span class="vs-dd vs-d12 vs-dd-off"></span>
      <span class="vs-slot vs-m3 d-flex align-items-center justify-content-center"><svg><use href="#navb"/></svg></span><span class="vs-dd vs-d9 vs-dd-off"></span>
      <span class="vs-slot d-flex align-items-center justify-content-center"><svg><use href="#navf"/></svg></span>
      <span class="vs-sep"></span>
      <span class="vs-slot vs-m1 d-flex align-items-center justify-content-center"><svg><use href="#play"/></svg></span>
      <span class="vs-slot d-flex align-items-center justify-content-center"><svg><use href="#find"/></svg></span>
      <span class="vs-combo vs-combo-w d-flex align-items-center">Debug<i class="vs-combo-arrow"></i></span>
      <span class="vs-sep vs-sep2"></span>
      <span class="vs-slot d-flex align-items-center justify-content-center"><svg><use href="#ffind"/></svg></span>
      <span class="vs-combo vs-combo-l d-flex align-items-center"><i class="vs-combo-arrow"></i></span>
      <span class="vs-sep vs-sep3"></span>
      <span class="vs-slot d-flex align-items-center justify-content-center"><svg><use href="#cfg"/></svg></span>
      <span class="vs-chev vs-chev2"></span>
    </div>
    <div class="d-flex vs-tb2">
      <div class="vs-tb vs-tb2w d-flex align-items-center flex-shrink-0">
        <span class="vs-grip"></span>
        <span class="vs-slot d-flex align-items-center justify-content-center"><svg><use href="#a0"/></svg></span><span class="vs-sep"></span>
        <span class="vs-slot d-flex align-items-center justify-content-center"><svg><use href="#a1"/></svg></span>
        <span class="vs-slot d-flex align-items-center justify-content-center"><svg><use href="#a2"/></svg></span>
        <span class="vs-slot d-flex align-items-center justify-content-center"><svg><use href="#a3"/></svg></span><span class="vs-sep"></span>
        <span class="vs-slot d-flex align-items-center justify-content-center"><svg><use href="#a4"/></svg></span>
        <span class="vs-slot d-flex align-items-center justify-content-center"><svg><use href="#a5"/></svg></span>
        <span class="vs-slot d-flex align-items-center justify-content-center"><svg><use href="#a6"/></svg></span><span class="vs-sep"></span>
        <span class="vs-slot d-flex align-items-center justify-content-center"><svg><use href="#s1"/></svg></span>
        <span class="vs-slot d-flex align-items-center justify-content-center"><svg><use href="#s2"/></svg></span>
        <span class="vs-slot d-flex align-items-center justify-content-center"><svg><use href="#s3"/></svg></span>
        <span class="vs-slot d-flex align-items-center justify-content-center"><svg><use href="#s4"/></svg></span><span class="vs-sep"></span>
        <span class="vs-slot d-flex align-items-center justify-content-center"><svg><use href="#h1"/></svg></span>
        <span class="vs-slot d-flex align-items-center justify-content-center"><svg><use href="#h2"/></svg></span>
        <span class="vs-slot d-flex align-items-center justify-content-center"><svg><use href="#h3"/></svg></span>
        <span class="vs-slot d-flex align-items-center justify-content-center"><svg><use href="#h4"/></svg></span><span class="vs-sep"></span>
        <span class="vs-slot d-flex align-items-center justify-content-center"><svg><use href="#v1"/></svg></span>
        <span class="vs-slot d-flex align-items-center justify-content-center"><svg><use href="#v2"/></svg></span>
        <span class="vs-slot d-flex align-items-center justify-content-center"><svg><use href="#v3"/></svg></span>
        <span class="vs-slot d-flex align-items-center justify-content-center"><svg><use href="#v3"/></svg></span><span class="vs-sep"></span>
        <span class="vs-slot d-flex align-items-center justify-content-center"><svg><use href="#c1"/></svg></span>
        <span class="vs-slot d-flex align-items-center justify-content-center"><svg><use href="#c2"/></svg></span><span class="vs-sep"></span>
        <span class="vs-slot d-flex align-items-center justify-content-center"><svg><use href="#f1"/></svg></span>
        <span class="vs-slot d-flex align-items-center justify-content-center"><svg><use href="#f2"/></svg></span><span class="vs-sep"></span>
        <span class="vs-slot d-flex align-items-center justify-content-center"><svg><use href="#tab"/></svg></span><span class="vs-sep"></span>
        <span class="vs-slot d-flex align-items-center justify-content-center"><svg><use href="#dat"/></svg></span>
        <span class="vs-chev"></span>
      </div>
      <span class="vs-mini d-flex align-items-center"><span class="vs-grip"></span></span>
      <span class="vs-mini vs-chev vs-chev2"></span>
      <div class="vs-tb vs-tb3w d-flex align-items-center flex-shrink-0">
        <span class="vs-grip"></span>
        <span class="vs-combo vs-combo-off d-flex align-items-center">Solid<i class="vs-combo-arrow"></i></span>
        <span class="vs-chev vs-chev2 ms-auto"></span>
      </div>
      <span class="vs-mini d-flex align-items-center"><span class="vs-grip"></span></span>
      <span class="vs-mini vs-chev vs-chev2"></span>
    </div>
    <div class="vs-gap"></div>

    <div class="vs-work d-flex">
      <div class="vs-vtabs">
        <div class="vs-vtab vs-h103"><svg><use href="#srv"/></svg>Server Explorer</div>
        <div class="vs-vtab vs-h67"><svg><use href="#tbx"/></svg>Toolbox</div>
        <div class="vs-vtab vs-h87"><svg><use href="#rpd"/></svg>Report Data</div>
      </div>
      <div class="vs-doc">
        <div class="vs-doctab d-flex">
          <div class="vs-tabhead d-flex align-items-center"><span>SampleGroup.rdl [Design]</span><span class="vs-tabx"><svg width="12" height="12"><use href="#cx"/></svg></span></div>
          <span class="vs-caret align-self-center"></span>
        </div>
        <div class="vs-strip"></div>
        <div class="vs-subtabs d-flex">
          <div class="vs-design d-flex align-items-center"><svg><use href="#pen"/></svg>Design</div>
          <div class="vs-preview d-flex align-items-center"><svg><use href="#pre"/></svg>Preview</div>
        </div>
        <div class="vs-surface">
          <table class="vs-rep">
            <colgroup><col class="vs-c20"><col class="vs-c57"><col class="vs-c96"><col class="vs-c96"><col class="vs-c48"><col class="vs-c96"><col class="vs-c32"></colgroup>
            <tr class="vs-r1"><td class="vs-hd"></td><td class="vs-hd"></td><td class="vs-hd"></td><td class="vs-hd"></td><td class="vs-hd"></td><td class="vs-hd"></td><td class="vs-hd"></td></tr>
            <tr class="vs-r2"><td class="vs-hd"></td><td class="vs-wrap vs-first">Sales Person#</td><td>Last Name</td><td>First Name</td><td class="vs-wrap">Middle Name</td><td class="vs-wrap">Email Promotion</td><td>Sales<br>Order</td></tr>
            <tr class="vs-r3"><td class="vs-gut"><svg width="16" height="18"><path d="M5 1C2 3 2 14 5 16" fill="none" stroke="#777"/><path d="M8 5h6M8 8h6M8 11h6" stroke="#555"/></svg></td><td class="vs-handle">[SalesPe</td><td>[LastName]</td><td>[FirstName]</td><td>[Middle</td><td>[EmailPromotion</td><td>[Sale</td></tr>
          </table>
          <div class="vs-body"></div>
          <div class="vs-sel"></div>
        </div>
        <div class="vs-hs d-flex align-items-center"><i class="vs-arr-l"></i><div class="vs-hs-thumb d-flex align-items-center justify-content-center"><i class="vs-grv"></i></div><i class="vs-arr-r"></i></div>
        <div class="vs-ghead d-flex align-items-center"><div class="vs-gcol d-flex align-items-center"><svg><use href="#rg"/></svg>Row Groups</div><div class="d-flex align-items-center flex-grow-1"><svg><use href="#cg"/></svg>Column Groups<i class="vs-combo-arrow"></i></div></div>
        <div class="vs-glists d-flex">
          <div class="vs-glist vs-gl1">
            <div class="vs-gbar d-flex align-items-center"><svg width="8" height="11" class="vs-gi"><path d="M6 1H2v9h4" fill="none" stroke="#6f6a5a" stroke-width="2"/></svg>(SalesPersonID)<span class="vs-gdd"></span></div>
            <div class="vs-gbar vs-gb2 d-flex align-items-center"><svg width="8" height="9" class="vs-gi"><path d="M0 2h7M0 4.500h7M0 7h7" stroke="#6f6a5a"/></svg>(Details)<span class="vs-gdd"></span></div>
          </div>
          <div class="vs-glist vs-gl2"></div>
        </div>
        <div class="vs-gfoot"></div>
      </div>

      <div class="vs-props">
        <div class="vs-phead d-flex align-items-center"><span>Properties</span><i class="vs-caret vs-caret-d ms-auto"></i><svg class="ms-1"><use href="#pin"/></svg><svg><use href="#cx"/></svg><span class="ms-1"></span></div>
        <div class="vs-pcombo"><div class="vs-pbox d-flex"><span class="vs-pbtn"></span></div></div>
        <div class="vs-ptool d-flex align-items-center">
          <span class="vs-pb d-flex align-items-center justify-content-center"><svg><use href="#grpb"/></svg></span>
          <span class="vs-pb vs-pb-on d-flex align-items-center justify-content-center"><svg><use href="#az"/></svg></span>
          <span class="vs-sep"></span>
          <span class="vs-pb d-flex align-items-center justify-content-center"><svg><use href="#pg"/></svg></span>
        </div>
        <div class="vs-grid d-flex">
          <div class="vs-rows">
            <div class="vs-row d-flex"><span class="vs-g"></span><span class="vs-n">BackgroundColor</span><span class="vs-v d-flex align-items-center"><i class="vs-swatch"></i>No Color</span></div>
            <div class="vs-row d-flex"><span class="vs-g d-flex align-items-center"><svg class="vs-tri"><use href="#tri"/></svg></span><span class="vs-n">BackgroundImage</span><span class="vs-v"></span></div>
            <div class="vs-row d-flex"><span class="vs-g"></span><span class="vs-n">Bookmark</span><span class="vs-v"></span></div>
            <div class="vs-row d-flex"><span class="vs-g d-flex align-items-center"><svg class="vs-tri"><use href="#tri"/></svg></span><span class="vs-n">BorderColor</span><span class="vs-v"><b>LightGrey</b></span></div>
            <div class="vs-row d-flex"><span class="vs-g d-flex align-items-center"><i class="vs-tri-d"></i></span><span class="vs-n">BorderStyle</span><span class="vs-v"><b>Solid</b></span></div>
            <div class="vs-row d-flex"><span class="vs-g"></span><span class="vs-n vs-n2">Default</span><span class="vs-v"><b>Solid</b></span></div>
            <div class="vs-row d-flex"><span class="vs-g"></span><span class="vs-n vs-n2">Left</span><span class="vs-v"></span></div>
            <div class="vs-row d-flex"><span class="vs-g"></span><span class="vs-n vs-n2">Right</span><span class="vs-v"></span></div>
            <div class="vs-row d-flex"><span class="vs-g"></span><span class="vs-n vs-n2 vs-on">Top</span><span class="vs-v d-flex"><i class="vs-vbtn"></i></span></div>
            <div class="vs-row d-flex"><span class="vs-g"></span><span class="vs-n vs-n2">Bottom</span><span class="vs-v"></span></div>
            <div class="vs-row d-flex"><span class="vs-g d-flex align-items-center"><svg class="vs-tri"><use href="#tri"/></svg></span><span class="vs-n">BorderWidth</span><span class="vs-v"></span></div>
            <div class="vs-row d-flex"><span class="vs-g"></span><span class="vs-n">Calendar</span><span class="vs-v"></span></div>
            <div class="vs-row d-flex"><span class="vs-g"></span><span class="vs-n">CanGrow</span><span class="vs-v"></span></div>
            <div class="vs-row d-flex"><span class="vs-g"></span><span class="vs-n">CanShrink</span><span class="vs-v"></span></div>
            <div class="vs-row d-flex"><span class="vs-g"></span><span class="vs-n">Color</span><span class="vs-v"></span></div>
            <div class="vs-row d-flex"><span class="vs-g"></span><span class="vs-n">DataElementName</span><span class="vs-v"></span></div>
            <div class="vs-row d-flex"><span class="vs-g"></span><span class="vs-n">DataElementOutput</span><span class="vs-v"></span></div>
            <div class="vs-row d-flex"><span class="vs-g"></span><span class="vs-n">DataElementStyle</span><span class="vs-v">Auto</span></div>
            <div class="vs-row d-flex"><span class="vs-g"></span><span class="vs-n">Direction</span><span class="vs-v">Default</span></div>
            <div class="vs-row d-flex"><span class="vs-g"></span><span class="vs-n">DocumentMapLabel</span><span class="vs-v"></span></div>
            <div class="vs-row d-flex"><span class="vs-g"></span><span class="vs-n">LabelLocID</span><span class="vs-v"></span></div>
          </div>
          <div class="vs-vs d-flex flex-column">
            <div class="vs-vs-up"></div>
            <div class="vs-vs-th d-flex align-items-center justify-content-center"><i class="vs-grv2"></i></div>
            <div class="flex-grow-1"></div>
            <div class="vs-vs-dn"></div>
          </div>
          <div class="vs-list">
            <div class="vs-li vs-li-on d-flex align-items-center">&lt;Expression...&gt;</div>
            <div class="vs-li d-flex align-items-center">Default</div>
            <div class="vs-li d-flex align-items-center">Dashed</div>
            <div class="vs-li d-flex align-items-center">Dotted</div>
            <div class="vs-li d-flex align-items-center">Double</div>
            <div class="vs-li d-flex align-items-center">None</div>
            <div class="vs-li d-flex align-items-center">Solid</div>
            <div class="vs-lfoot"><svg><use href="#hat"/></svg></div>
          </div>
        </div>
        <div class="vs-pfoot"></div>
      </div>
      <div class="vs-rtabs">
        <div class="vs-vtab vs-h115"><svg><use href="#sol"/></svg>Solution Explorer</div>
        <div class="vs-vtab vs-h99"><svg><use href="#tex"/></svg>Team Explorer</div>
        <div class="vs-vtab vs-h80"><svg><use href="#cls"/></svg>Class View</div>
      </div>
    </div>
    <div class="vs-status d-flex align-items-center">Ready</div>
  </div>
  <div class="vs-host d-flex align-items-center">
    <span class="vs-hi d-flex align-items-center justify-content-center"><svg><use href="#dsk"/></svg></span>
    <span class="vs-hi d-flex align-items-center justify-content-center"><svg><use href="#cd"/></svg></span>
    <span class="vs-hi d-flex align-items-center justify-content-center"><svg><use href="#usb"/></svg></span>
    <span class="vs-hi d-flex align-items-center justify-content-center"><svg><use href="#net"/></svg></span>
    <span class="vs-hi d-flex align-items-center justify-content-center"><svg><use href="#fld"/></svg></span>
    <span class="vs-hi d-flex align-items-center justify-content-center"><svg><use href="#vc"/></svg></span>
    <span class="vs-hsep"></span>
    <span class="vs-hi d-flex align-items-center justify-content-center"><svg><use href="#glb"/></svg></span>
    <span class="vs-hi d-flex align-items-center justify-content-center"><svg><use href="#cap"/></svg></span>
    <span class="vs-rt">Right<span class="vs-cmd">⌘</span></span>
    <span class="vs-resize"></span>
  </div>
</div>
<script src="https://cdn.jsdelivr.net/npm/bootstrap@5.3.0/dist/js/bootstrap.bundle.min.js"></script>
</body></html>
